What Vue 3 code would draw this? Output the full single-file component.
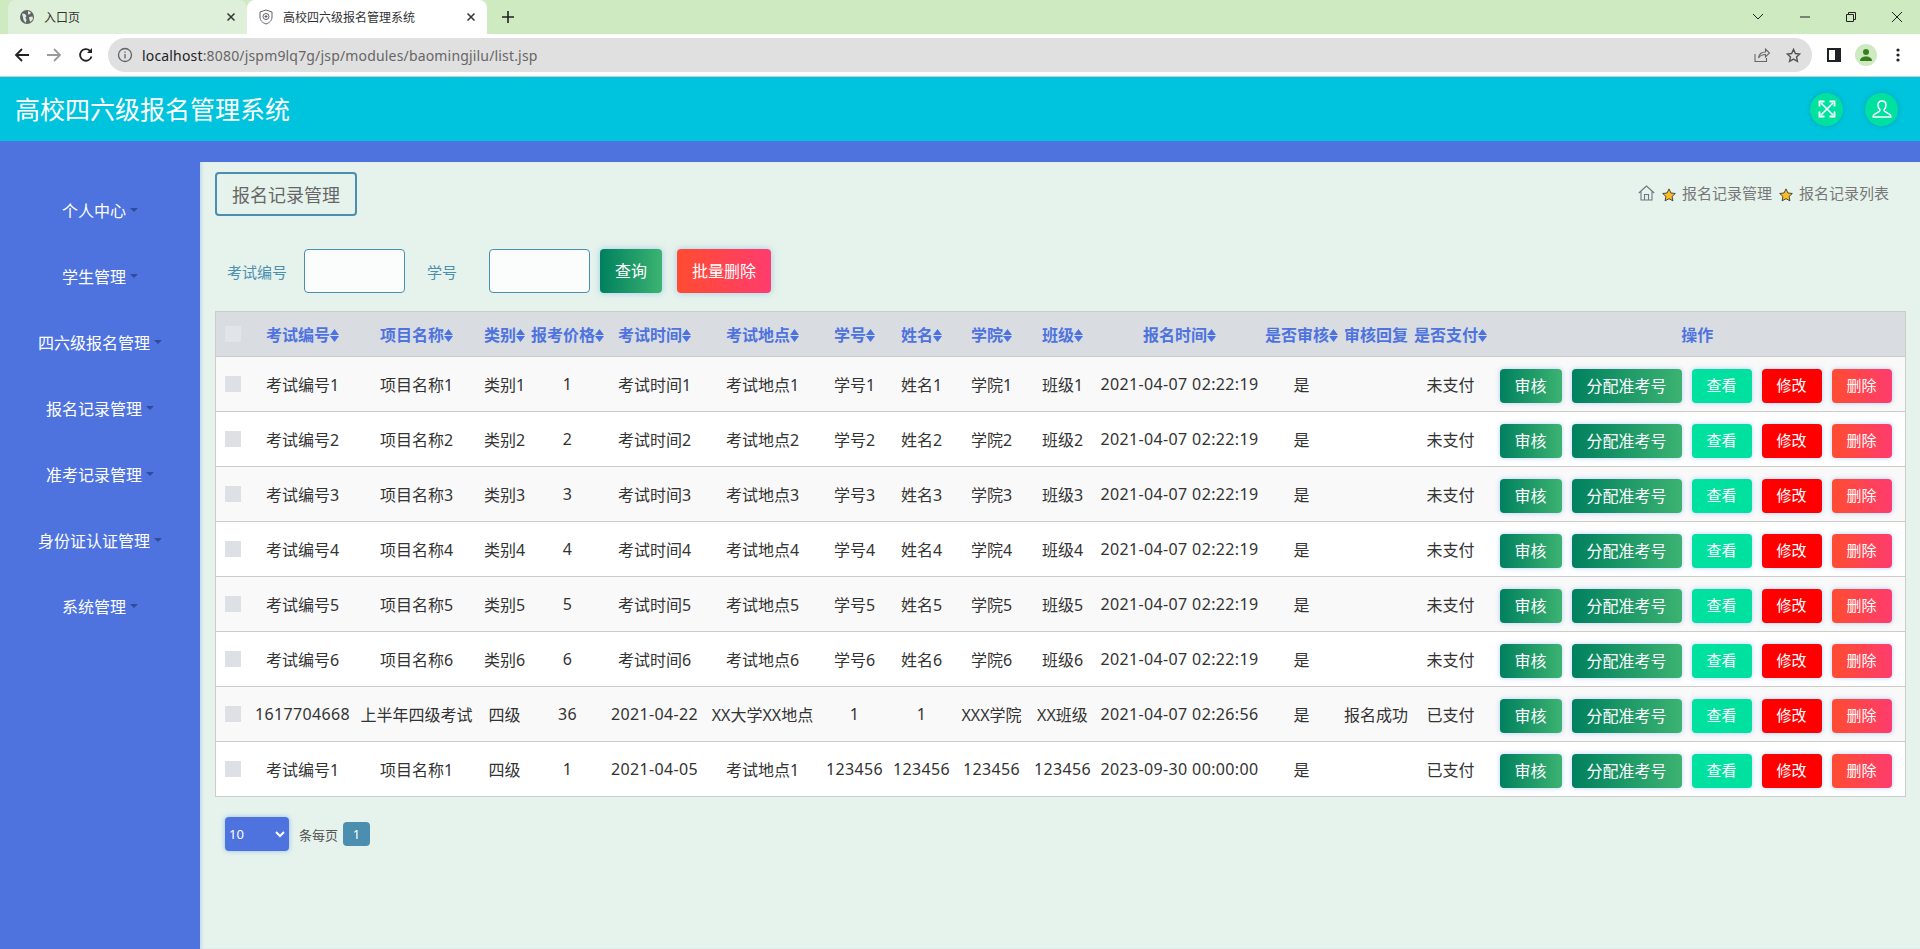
<script setup>
const menu = ['个人中心', '学生管理', '四六级报名管理', '报名记录管理', '准考记录管理', '身份证认证管理', '系统管理']
const columns = [
  { t: '考试编号', w: 104, s: 1 }, { t: '项目名称', w: 124, s: 1 }, { t: '类别', w: 52, s: 1 },
  { t: '报考价格', w: 74, s: 1 }, { t: '考试时间', w: 100, s: 1 }, { t: '考试地点', w: 116, s: 1 },
  { t: '学号', w: 68, s: 1 }, { t: '姓名', w: 66, s: 1 }, { t: '学院', w: 74, s: 1 },
  { t: '班级', w: 68, s: 1 }, { t: '报名时间', w: 166, s: 1 }, { t: '是否审核', w: 78, s: 1 },
  { t: '审核回复', w: 71, s: 0 }, { t: '是否支付', w: 78, s: 1 }
]
const rows = [1, 2, 3, 4, 5, 6].map((i) => [
  `考试编号${i}`, `项目名称${i}`, `类别${i}`, `${i}`, `考试时间${i}`, `考试地点${i}`, `学号${i}`, `姓名${i}`,
  `学院${i}`, `班级${i}`, '2021-04-07 02:22:19', '是', '', '未支付'
])
rows.push(['1617704668', '上半年四级考试', '四级', '36', '2021-04-22', 'XX大学XX地点', '1', '1', 'XXX学院', 'XX班级', '2021-04-07 02:26:56', '是', '报名成功', '已支付'])
rows.push(['考试编号1', '项目名称1', '四级', '1', '2021-04-05', '考试地点1', '123456', '123456', '123456', '123456', '2023-09-30 00:00:00', '是', '', '已支付'])
const actions = [
  { t: '审核', c: 'green wide' }, { t: '分配准考号', c: 'green wide' }, { t: '查看', c: 'mint' },
  { t: '修改', c: 'red' }, { t: '删除', c: 'coral' }
]
const isNum = (v) => /^[0-9 :-]+$/.test(v)
</script>

<template>
  <div class="page">
    <div class="tabstrip">
      <div class="tab inactive">
        <svg class="fav" width="16" height="16" viewBox="0 0 16 16"><circle cx="8" cy="8" r="7" fill="#5f6368"/><path d="M3 4.500l3 .5 1.500 2-1 1.500 1 2.500-1 3-2-3-.5-2.500zM9 2l3 1.500-1 1.500-2 .5zM10 8l3.500-.5.5 2.500-2.500 3-1-2z" fill="#def0d9"/></svg>
        <span class="tabtext">入口页</span>
        <svg class="tabx" width="8" height="8" viewBox="0 0 8 8" fill="none" stroke="#333" stroke-width="1.500"><path d="M.5.5l7 7M7.500.5l-7 7"/></svg>
      </div>
      <div class="tab active">
        <svg class="fav" width="16" height="16" viewBox="0 0 16 16" fill="none" stroke="#5f6368"><path d="M8 1l6 2v5c0 3.500-2.500 5.800-6 7-3.500-1.200-6-3.500-6-7V3z"/><circle cx="8" cy="7.500" r="3"/><path d="M8 6v3M6.500 7.500h3"/></svg>
        <span class="tabtext">高校四六级报名管理系统</span>
        <svg class="tabx" width="8" height="8" viewBox="0 0 8 8" fill="none" stroke="#333" stroke-width="1.500"><path d="M.5.5l7 7M7.500.5l-7 7"/></svg>
      </div>
      <svg class="plus" width="12" height="12" viewBox="0 0 12 12"><path d="M6 0v12M0 6h12" stroke="#222" stroke-width="1.600"/></svg>
      <div class="winctl">
        <svg width="12" height="8" viewBox="0 0 12 8" fill="none" stroke="#222"><path d="M1 1l5 5 5-5"/></svg>
        <svg width="10" height="2" viewBox="0 0 10 2"><path d="M0 1h10" stroke="#222"/></svg>
        <svg width="10" height="10" viewBox="0 0 10 10" fill="none" stroke="#222"><path d="M.5 2.500h7v7h-7zM2.500 2.500v-2h7v7h-2"/></svg>
        <svg width="10" height="10" viewBox="0 0 10 10" fill="none" stroke="#222"><path d="M0 0l10 10M10 0L0 10"/></svg>
      </div>
    </div>

    <div class="toolbar">
      <svg class="nav" width="16" height="16" viewBox="0 0 16 16" fill="none" stroke="#222" stroke-width="1.800"><path d="M15 8H2M8 2L2 8l6 6"/></svg>
      <svg class="nav" width="16" height="16" viewBox="0 0 16 16" fill="none" stroke="#9a9a9a" stroke-width="1.800"><path d="M1 8h13M8 2l6 6-6 6"/></svg>
      <svg class="nav last" width="16" height="16" viewBox="0 0 16 16" fill="none" stroke="#222" stroke-width="1.800"><path d="M13.500 9.500A5.800 5.800 0 1 1 12 3.800"/><path d="M14 1v5h-5" fill="#222" stroke="none"/></svg>
      <div class="omni">
        <svg width="16" height="16" viewBox="0 0 16 16" fill="none" stroke="#5f6368" stroke-width="1.300"><circle cx="8" cy="8" r="6.500"/><path d="M8 7v4.500M8 4.500v1.300"/></svg>
        <span class="url"><b>localhost</b>:8080/jspm9lq7g/jsp/modules/baomingjilu/list.jsp</span>
        <span class="grow"></span>
        <svg width="16" height="16" viewBox="0 0 16 16" fill="none" stroke="#666" stroke-width="1.100"><path d="M1 7v7.500h11.500V11"/><path d="M4.500 11c.5-4 3-6 7-6V2l4 4-4 4V7.500c-3 0-5.500 1-7 3.500z"/></svg>
        <svg class="ostar" width="15" height="15" viewBox="0 0 16 16" fill="none" stroke="#555" stroke-width="1.500"><path d="M8 1.500l2 4.400 4.700.5-3.500 3.200 1 4.700L8 11.900l-4.200 2.400 1-4.700L1.300 6.400 6 5.900z"/></svg>
      </div>
      <svg class="panel" width="14" height="14" viewBox="0 0 14 14"><path d="M0 0h14v14H0z" fill="#202124"/><path d="M2 2h6v10H2z" fill="#fff"/></svg>
      <span class="avatar">
        <svg width="14" height="14" viewBox="0 0 14 14" fill="#3a7d1e"><circle cx="7" cy="4" r="3"/><path d="M1 13c0-3 2.500-4.500 6-4.500s6 1.500 6 4.500z"/></svg>
      </span>
      <svg class="dots" width="4" height="14" viewBox="0 0 4 14" fill="#222"><circle cx="2" cy="2" r="1.600"/><circle cx="2" cy="7" r="1.600"/><circle cx="2" cy="12" r="1.600"/></svg>
    </div>

    <header class="topbar">
      <h1>高校四六级报名管理系统</h1>
      <div class="topbtns">
        <span class="round">
          <svg width="18" height="18" viewBox="0 0 18 18" fill="none" stroke="#fff" stroke-width="1.500"><path d="M3 3l12 12M15 3L3 15"/><path d="M1.500 6.500v-5h5M11.500 1.500h5v5M16.500 11.500v5h-5M6.500 16.500h-5v-5" stroke-width="1.800"/></svg>
        </span>
        <span class="round">
          <svg width="20" height="20" viewBox="0 0 20 20" fill="none" stroke="#fff" stroke-width="1.500"><path d="M10 2c-2.500 0-4 1.800-4 4.200 0 1.800.8 3.300 1.800 4.200.4.600.2 1.500-.5 2L2 15.500c-.6.500-.8 1-.8 2.500h17.600c0-1.500-.2-2-.8-2.500l-5.300-3.100c-.7-.5-.9-1.400-.5-2 1-.9 1.800-2.400 1.800-4.200C14 3.800 12.500 2 10 2z"/></svg>
        </span>
      </div>
    </header>

    <div class="body">
      <aside class="sidebar">
        <div v-for="m in menu" :key="m" class="menuitem">
          <span>{{ m }}</span><i class="caret"></i>
        </div>
      </aside>

      <main class="main">
        <div class="titlerow">
          <div class="title">报名记录管理</div>
          <div class="crumb">
            <svg width="17" height="16" viewBox="0 0 17 16" fill="none" stroke="#6b7780" stroke-width="1.100"><path d="M.8 8L8.500 1l7.700 7M3 6.500V15h11V6.500M6.500 15V9.500h4V15"/></svg>
            <svg class="star" width="14" height="14" viewBox="0 0 16 16"><path d="M8 1l2.200 4.700 5 .6-3.700 3.400 1 5L8 12.200l-4.500 2.500 1-5L.8 6.300l5-.6z" fill="#fbbd23" stroke="#333" stroke-width="1"/></svg>
            <span>报名记录管理</span>
            <svg class="star" width="14" height="14" viewBox="0 0 16 16"><path d="M8 1l2.200 4.700 5 .6-3.700 3.400 1 5L8 12.200l-4.500 2.500 1-5L.8 6.300l5-.6z" fill="#fbbd23" stroke="#333" stroke-width="1"/></svg>
            <span>报名记录列表</span>
          </div>
        </div>

        <div class="filters">
          <label class="lab first">考试编号</label>
          <input class="inp" type="text" />
          <label class="lab second">学号</label>
          <input class="inp" type="text" />
          <button class="fbtn green query">查询</button>
          <button class="fbtn coral batch">批量删除</button>
        </div>

        <table class="grid">
          <colgroup>
            <col style="width: 35px" />
            <col v-for="c in columns" :key="c.t" :style="{ width: c.w + 'px' }" />
            <col style="width: 416px" />
          </colgroup>
          <thead>
            <tr>
              <th><input class="chk head" type="checkbox" /></th>
              <th v-for="c in columns" :key="c.t">
                {{ c.t }}<svg v-if="c.s" class="sort" width="9" height="13" viewBox="0 0 9 13"><path d="M4.500 0L9 6H0zM0 7h9l-4.500 6z" fill="#4e73df"/></svg>
              </th>
              <th>操作</th>
            </tr>
          </thead>
          <tbody>
            <tr v-for="(r, i) in rows" :key="i">
              <td><input class="chk" type="checkbox" /></td>
              <td v-for="(v, j) in r" :key="j" :class="{ num: isNum(v) }">{{ v }}</td>
              <td class="ops">
                <div class="opsrow">
                  <button v-for="a in actions" :key="a.t" class="abtn" :class="a.c">{{ a.t }}</button>
                </div>
              </td>
            </tr>
          </tbody>
        </table>

        <div class="pager">
          <div class="selwrap">
            <select class="sel"><option>10</option><option>20</option><option>50</option></select>
            <svg class="chev" width="10" height="7" viewBox="0 0 10 7" fill="none" stroke="#fff" stroke-width="2"><path d="M1 1l4 4 4-4"/></svg>
          </div>
          <span class="perpage">条每页</span>
          <span class="pageno">1</span>
        </div>
      </main>
    </div>
  </div>
</template>

<style>
html, body { margin: 0; padding: 0; overflow: hidden; }
</style>

<style scoped>
.page {
  height: 100vh;
  display: flex;
  flex-direction: column;
  overflow: hidden;
  font-family: "Noto Sans", "Noto Sans CJK SC", sans-serif;
  color: #333;
}
.tabstrip {
  height: 34px;
  flex: none;
  background: #cdeac0;
  display: flex;
  align-items: stretch;
  padding-left: 8px;
}
.tab {
  width: 240px;
  box-sizing: border-box;
  display: flex;
  align-items: center;
  padding: 0 12px 0 11px;
  border-radius: 8px 8px 0 0;
  font-size: 12px;
  color: #333;
}
.tab.inactive { width: 239px; background: #def0d9; }
.tab.active { background: #fff; }
.fav { flex: none; margin-right: 9px; }
.tabtext { flex: 1; white-space: nowrap; }
.tabx { flex: none; }
.plus { align-self: center; margin-left: 15px; }
.winctl {
  margin-left: auto;
  display: flex;
  align-items: center;
  gap: 36px;
  padding-right: 18px;
}
.toolbar {
  height: 42px;
  flex: none;
  box-sizing: content-box;
  background: #fff;
  border-bottom: 1px solid #ccc;
  display: flex;
  align-items: center;
  padding-left: 14px;
}
.nav { margin-right: 16px; flex: none; }
.nav.last { margin-right: 14px; }
.omni {
  width: 1704px;
  height: 34px;
  box-sizing: border-box;
  border-radius: 17px;
  background: #e0e0e0;
  display: flex;
  align-items: center;
  padding: 0 11px 0 9px;
}
.url {
  margin-left: 9px;
  font-size: 14px;
  letter-spacing: 0.17px;
  color: #666;
  white-space: nowrap;
}
.url b { font-weight: 400; color: #222; }
.grow { flex: 1; }
.ostar { margin-left: 16px; }
.panel { margin-left: 15px; }
.avatar {
  margin-left: 14px;
  width: 22px;
  height: 22px;
  border-radius: 50%;
  background: #cdeac0;
  display: flex;
  align-items: center;
  justify-content: center;
}
.dots { margin-left: 19px; }
.topbar {
  height: 64px;
  flex: none;
  background: #00c4dd;
  display: flex;
  align-items: center;
  justify-content: space-between;
  padding: 0 22px 0 15px;
}
.topbar h1 {
  margin: 0;
  padding-bottom: 2px;
  font-size: 25px;
  font-weight: 400;
  color: #fff;
  white-space: nowrap;
}
.topbtns { display: flex; gap: 22px; }
.round {
  width: 33px;
  height: 33px;
  border-radius: 50%;
  background: #00e1a0;
  box-shadow: 0 0 6px rgba(0, 0, 0, 0.15);
  display: flex;
  align-items: center;
  justify-content: center;
}
.body { flex: 1; display: flex; min-height: 0; }
.sidebar {
  width: 200px;
  flex: none;
  background: #4e73df;
  padding-top: 36px;
  box-sizing: border-box;
}
.menuitem {
  height: 66px;
  display: flex;
  align-items: center;
  justify-content: center;
  color: #fff;
  font-size: 16px;
  white-space: nowrap;
}
.caret {
  width: 0;
  height: 0;
  margin-left: 4px;
  border-left: 4px solid transparent;
  border-right: 4px solid transparent;
  border-top: 4px solid rgba(30, 50, 110, 0.6);
}
.main {
  flex: 1;
  min-width: 0;
  background: #e6f3ec;
  border-top: 21px solid #4e73df;
  padding: 10px 15px 0;
  box-shadow: inset 3px 0 3px -1px rgba(78, 140, 223, 0.2);
}
.titlerow {
  display: flex;
  justify-content: space-between;
  align-items: flex-start;
}
.title {
  width: 142px;
  height: 44px;
  box-sizing: border-box;
  border: 2px solid #4b8eb0;
  border-radius: 4px;
  color: #666;
  font-size: 18px;
  display: flex;
  align-items: center;
  justify-content: center;
  margin-bottom: 33px;
}
.crumb {
  display: flex;
  align-items: center;
  margin-top: 12px;
  padding-right: 16px;
  color: #777;
  font-size: 15px;
  line-height: 18px;
}
.star { margin: 3px 6px 0 7px; }
.filters { display: flex; align-items: center; height: 44px; }
.lab { font-size: 15px; color: #4b8eb0; white-space: nowrap; }
.lab.first { margin-left: 12px; margin-right: 17px; }
.lab.second { margin-left: 22px; margin-right: 32px; }
.inp {
  width: 101px;
  height: 44px;
  box-sizing: border-box;
  border: 1px solid #4b8eb0;
  border-radius: 4px;
  background: #fbfdfc;
  outline: none;
  padding: 0;
}
.fbtn {
  height: 44px;
  border: 0;
  border-radius: 4px;
  color: #fff;
  font: inherit;
  font-size: 16px;
  padding: 0 0 2px;
  box-shadow: 0 0 6px rgba(90, 160, 240, 0.5);
}
.query { width: 62px; margin-left: 10px; }
.batch { width: 94px; margin-left: 15px; }
.green { background: linear-gradient(to right, #00805e, #3cb371); }
.coral { background: linear-gradient(to right, #ff4c30, #ff3c6e); }
.mint { background: #00e1a0; }
.red { background: #ff0000; }
.grid {
  margin-top: 18px;
  width: 1690px;
  box-sizing: border-box;
  table-layout: fixed;
  border-collapse: collapse;
  border: 1px solid #ccc;
  background: #fff;
  font-size: 16px;
}
.grid th, .grid td {
  padding: 0;
  text-align: center;
  vertical-align: middle;
  white-space: nowrap;
  color: #333;
  font-weight: 400;
}
.grid td.num { letter-spacing: 0.36px; }
.grid thead tr { height: 45px; background: #d9dde2; }
.grid th { color: #4e73df; font-weight: 600; }
.grid tbody tr { height: 55px; border-top: 1px solid #ccc; background: #fff; }
.grid tbody tr:nth-child(odd) { background: #f9f9f9; }
.sort { vertical-align: -1px; }
.chk {
  appearance: none;
  display: block;
  margin: 0 0 0 9px;
  width: 16px;
  height: 16px;
  background: #dde0e5;
}
.chk.head { background: #e1e4e8; }
.ops { padding-top: 4px !important; }
.opsrow { display: flex; gap: 10px; padding-left: 10px; }
.abtn {
  width: 60px;
  height: 34px;
  flex: none;
  border: 0;
  border-radius: 4px;
  color: #fff;
  font: inherit;
  font-size: 15px;
  padding: 0 0 3px;
  box-shadow: 0 0 5px rgba(90, 150, 250, 0.45);
}
.abtn.wide { width: auto; padding: 0 15px 3px; font-size: 16px; }
.pager { margin-top: 20px; display: flex; align-items: center; height: 34px; margin-left: 10px; }
.selwrap { position: relative; width: 64px; height: 34px; }
.sel {
  appearance: none;
  width: 64px;
  height: 34px;
  border: 0;
  border-radius: 4px;
  background: #4e73df;
  color: #fff;
  font: inherit;
  font-size: 13px;
  padding: 0 0 0 4px;
  box-shadow: 0 0 5px rgba(90, 150, 250, 0.6);
  outline: none;
}
.chev { position: absolute; right: 4px; top: 14px; pointer-events: none; }
.perpage { margin-left: 10px; font-size: 13px; color: #555; }
.pageno {
  margin-left: 5px;
  width: 27px;
  height: 24px;
  border-radius: 4px;
  background: #4b8eb0;
  color: #fff;
  font-size: 13px;
  display: flex;
  align-items: center;
  justify-content: center;
}
</style>
